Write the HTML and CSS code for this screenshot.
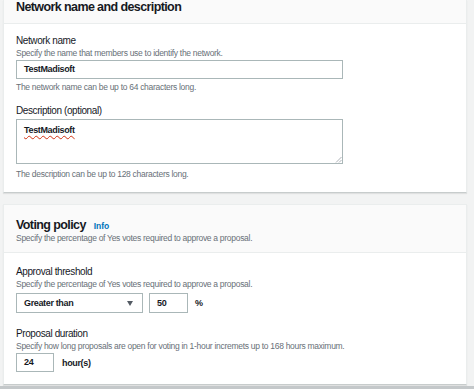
FILE: index.html
```html
<!DOCTYPE html>
<html lang="en">
<head>
    <meta charset="UTF-8">
    <title>Network configuration</title>
    <link rel="stylesheet" href="styles.css">
</head>
<body>

<div class="page">
    <section class="panel panel-first">
        <div class="panel-header">
            <h2>Network name and description</h2>
        </div>
        <div class="panel-body">
            <div class="field">
                <label>Network name</label>
                <p class="field-desc">Specify the name that members use to identify the network.</p>
                <div class="text-input wide">TestMadisoft</div>
                <p class="field-hint">The network name can be up to 64 characters long.</p>
            </div>
            <div class="field field-gap">
                <label>Description (optional)</label>
                <div class="text-area">
                    <span class="misspelled">TestMadisoft</span>
                    <svg class="grip" width="7" height="7" viewBox="0 0 7 7">
                        <path d="M6.5 1 L1 6.5 M6.5 4 L4 6.5" stroke="#9aa0a6" stroke-width="0.8" fill="none"/>
                    </svg>
                </div>
                <p class="field-hint hint-area">The description can be up to 128 characters long.</p>
            </div>
        </div>
    </section>

    <section class="panel">
        <div class="panel-header header-full">
            <h2>Voting policy <a class="info-link">Info</a></h2>
            <p class="field-desc">Specify the percentage of Yes votes required to approve a proposal.</p>
        </div>
        <div class="panel-body body-voting">
            <div class="field">
                <label>Approval threshold</label>
                <p class="field-desc">Specify the percentage of Yes votes required to approve a proposal.</p>
                <div class="inline-row row-threshold">
                    <div class="select-box">
                        <span>Greater than</span>
                        <svg width="6" height="5" viewBox="0 0 6 5"><path d="M0 0 H6 L3 5 Z" fill="#545b64"/></svg>
                    </div>
                    <div class="text-input small">50</div>
                    <span class="unit">%</span>
                </div>
            </div>
            <div class="field field-gap2">
                <label>Proposal duration</label>
                <p class="field-desc">Specify how long proposals are open for voting in 1-hour incremets up to 168 hours maximum.</p>
                <div class="inline-row row-duration">
                    <div class="text-input tiny">24</div>
                    <span class="unit">hour(s)</span>
                </div>
            </div>
        </div>
    </section>
    <div class="page-footer"></div>
</div>

</body>
</html>
```

FILE: styles.css
```css
:root {
    --text: #16191f;
    --muted: #687078;
    --border: #aab7b8;
    --line: #eaeded;
    --header-bg: #fafafa;
    --link: #0073bb;
}
body {
    margin: 0;
    background: #f2f3f3;
    font-family: 'Liberation Sans', Arial, sans-serif;
    color: var(--text);
    overflow: hidden;
}
.page {
    width: 474px;
    height: 389px;
    padding: 0 7px 0 3px;
    box-sizing: border-box;
    display: flex;
    flex-direction: column;
}
.panel {
    background: #ffffff;
    border: 1px solid var(--line);
    border-bottom: 1px solid #c7cccc;
    box-shadow: 0 1px 1px rgba(0,0,0,0.08);
}
.panel-first { border-top: none; margin-bottom: 11px; }
.panel-header {
    background: var(--header-bg);
    border-bottom: 1px solid var(--line);
    padding: 0 12px 9px;
}
.header-full { padding: 13px 12px 8px; }
.panel-header h2 {
    margin: 0;
    font-size: 12.5px;
    line-height: 14px;
    font-weight: 700;
    letter-spacing: -0.6px;
}
.info-link {
    color: var(--link);
    font-size: 8.5px;
    font-weight: 700;
    letter-spacing: 0;
    margin-left: 5px;
}
.panel-body { padding: 10px 12px 12px; }
.body-voting { padding-top: 12px; }
.field label {
    display: block;
    font-size: 10px;
    line-height: 14px;
    letter-spacing: -0.4px;
}
.field-desc {
    margin: 0;
    font-size: 8.5px;
    line-height: 11px;
    color: var(--muted);
    letter-spacing: -0.29px;
}
.field-hint {
    margin: 3px 0 0;
    font-size: 8.5px;
    line-height: 11px;
    color: var(--muted);
    letter-spacing: -0.29px;
}
.hint-area { margin-top: 5px; }
.field-gap { margin-top: 11px; }
.field-gap2 { margin-top: 14px; }
.text-input {
    height: 19px;
    box-sizing: border-box;
    border: 1px solid var(--border);
    padding: 0 7px;
    font-size: 9px;
    font-weight: 700;
    letter-spacing: -0.35px;
    line-height: 17px;
    background: #fff;
}
.wide { width: 327px; margin-top: 1px; }
.small { width: 39px; height: 20px; line-height: 18px; }
.tiny { width: 38px; }
.text-area {
    position: relative;
    width: 327px;
    height: 45px;
    box-sizing: border-box;
    border: 1px solid var(--border);
    margin-top: 1px;
    padding: 4px 7px;
    font-size: 9px;
    font-weight: 700;
    letter-spacing: -0.35px;
    line-height: 13px;
}
.misspelled {
    text-decoration: underline wavy #d13212;
    text-decoration-thickness: 1px;
    text-underline-offset: 2px;
}
.grip { position: absolute; right: 0; bottom: 0; }
.inline-row {
    display: flex;
    align-items: center;
    gap: 6px;
}
.row-threshold { margin-top: 3px; }
.row-duration { margin-top: 1px; gap: 7px; }
.select-box {
    width: 127px;
    height: 20px;
    box-sizing: border-box;
    border: 1px solid var(--border);
    padding: 0 9px 0 7px;
    display: flex;
    align-items: center;
    justify-content: space-between;
    font-size: 9px;
    font-weight: 700;
    letter-spacing: -0.35px;
}
.unit {
    font-size: 9px;
    font-weight: 700;
    letter-spacing: -0.35px;
    margin-left: 1px;
}
.page-footer {
    margin-top: auto;
    height: 3px;
    background: #c4c8ca;
    margin-left: -3px;
    margin-right: -7px;
}
```
